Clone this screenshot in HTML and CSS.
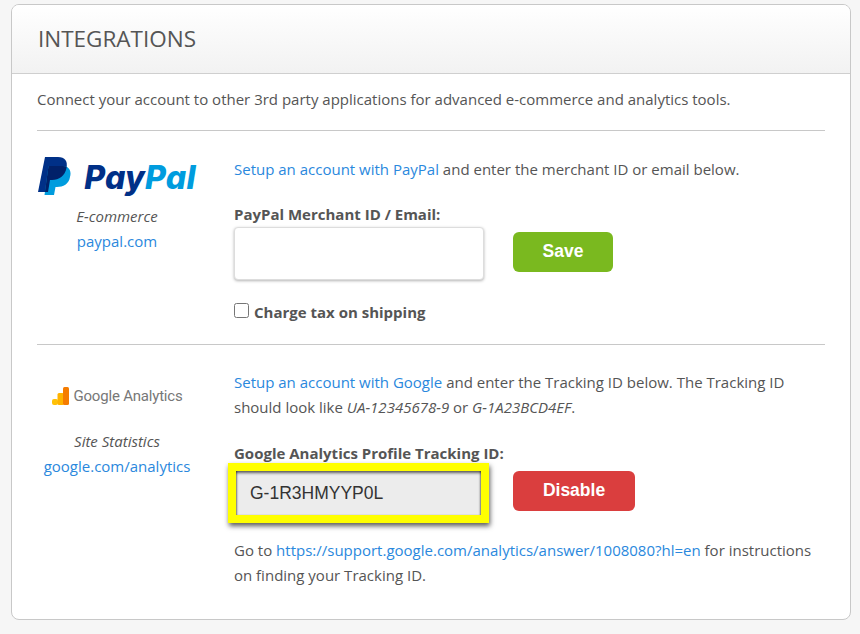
FILE: index.html
```html
<!DOCTYPE html>
<html lang="en">
<head>
<meta charset="utf-8">
<title>Integrations</title>
<link rel="stylesheet" href="styles.css">
</head>
<body>
<section class="card">
  <header class="card-head"><h1>INTEGRATIONS</h1></header>
  <div class="card-body">
    <p class="intro">Connect your account to other 3rd party applications for advanced e-commerce and analytics tools.</p>
    <div class="row row-paypal">
      <div class="side">
        <div class="logo logo-pp">
          <svg class="pp-mark" viewBox="0 0 33 38" width="33" height="38" aria-hidden="true">
            <defs>
              <clipPath id="pp-clip"><path d="M7 0H20C27 0 30 4 28.500 11C27 19 21 23 14 23H12L10 35H0Z"/></clipPath>
            </defs>
            <path fill="#003087" d="M7 0H20C27 0 30 4 28.500 11C27 19 21 23 14 23H12L10 35H0Z"/>
            <path fill="#009cde" d="M10.500 9H25C30 9 34 13 32 20C31 27 25 30 19 30H17.500L16 38H6.500Z"/>
            <path fill="#012169" clip-path="url(#pp-clip)" d="M10.500 9H25C30 9 34 13 32 20C31 27 25 30 19 30H17.500L16 38H6.500Z"/>
          </svg>
          <span class="pp-word"><span class="pp-pay">Pay</span><span class="pp-pal">Pal</span></span>
        </div>
        <em class="cat">E-commerce</em>
        <a href="#">paypal.com</a>
      </div>
      <div class="main">
        <p class="lead"><a href="#">Setup an account with PayPal</a> and enter the merchant ID or email below.</p>
        <label class="field-label">PayPal Merchant ID / Email:</label>
        <div class="field-row">
          <input class="text-input" type="text">
          <button class="btn btn-save" type="button">Save</button>
        </div>
        <label class="check"><input type="checkbox"><span>Charge tax on shipping</span></label>
      </div>
    </div>
    <div class="row row-ga">
      <div class="side">
        <div class="logo logo-ga">
          <svg viewBox="0 0 17 18" width="17" height="18" aria-hidden="true">
            <rect x="0" y="12" width="6" height="6" rx="2" fill="#ffc107"/>
            <rect x="5.500" y="6" width="6.500" height="12" rx="1.500" fill="#ffb300"/>
            <rect x="11" y="0" width="6" height="18" rx="1.500" fill="#f57c00"/>
          </svg>
          <span class="ga-word">Google Analytics</span>
        </div>
        <em class="cat">Site Statistics</em>
        <a href="#">google.com/analytics</a>
      </div>
      <div class="main">
        <p class="lead"><a href="#">Setup an account with Google</a> and enter the Tracking ID below. The Tracking ID should look like <em>UA-12345678-9</em> or <em>G-1A23BCD4EF</em>.</p>
        <label class="field-label field-label-ga">Google Analytics Profile Tracking ID:</label>
        <div class="field-row">
          <div class="highlight"><input class="text-input text-input-off" type="text" value="G-1R3HMYYP0L" disabled></div>
          <button class="btn btn-disable" type="button">Disable</button>
        </div>
        <p class="foot">Go to <a href="#">https://support.google.com/analytics/answer/1008080?hl=en</a> for instructions on finding your Tracking ID.</p>
      </div>
    </div>
  </div>
</section>
</body>
</html>
```

FILE: styles.css
```css
* { box-sizing: border-box; }
html, body { height: 100%; }
body {
  margin: 0;
  padding: 4px 9px 14px 11px;
  background: #f6f6f6;
  font-family: "Open Sans", sans-serif;
  font-size: 15px;
  line-height: 25px;
  color: #555;
  overflow: hidden;
}
a { color: #2a88dd; text-decoration: none; }
p { margin: 0; }
.card {
  height: 616px;
  background: #fff;
  border: 1px solid #c8c8c8;
  border-radius: 8px;
  overflow: hidden;
}
.card-head {
  height: 69px;
  padding: 0 26px 2px;
  display: flex;
  align-items: center;
  background: linear-gradient(#ffffff, #f2f2f2);
  border-bottom: 1px solid #cfcfcf;
}
.card-head h1 {
  margin: 0;
  font-size: 22.5px;
  font-weight: 400;
  color: #555;
}
.card-body { padding: 13px 25px 0; }
.intro { padding-bottom: 18px; }
.row { display: flex; border-top: 1px solid #c8c8c8; }
.row-paypal { padding-top: 26px; height: 214px; }
.row-ga { padding-top: 25px; }
.side {
  width: 160px;
  flex: none;
  display: flex;
  flex-direction: column;
  align-items: center;
}
.main { margin-left: 37px; flex: 1; }
.cat { display: block; }
.logo { display: flex; align-items: center; }
.logo-pp { height: 38px; margin-bottom: 9px; gap: 13px; }
.pp-mark { flex: none; }
.pp-word {
  font-family: Inter, sans-serif;
  font-weight: 800;
  font-style: italic;
  font-size: 32px;
  line-height: 38px;
  letter-spacing: 0.2px;
  position: relative;
  top: 2px;
}
.pp-pay { color: #003087; }
.pp-pal { color: #009cde; }
.logo-ga { height: 18px; margin: 17px 0 24px; gap: 5px; }
.ga-word {
  font-family: Roboto, sans-serif;
  font-size: 15px;
  line-height: 18px;
  color: #777;
  letter-spacing: -0.2px;
}
.field-label { display: block; margin-top: 20px; font-weight: 700; }
.field-label-ga { margin-top: 21px; }
.field-row { display: flex; align-items: flex-start; }
.text-input {
  width: 250px;
  height: 53px;
  border: 1px solid #ddd;
  border-radius: 4px;
  background: #fff;
  box-shadow: 0 1px 3px rgba(0,0,0,.3);
  font-family: "Liberation Sans", sans-serif;
  font-size: 17.5px;
  padding: 0 13px;
}
.btn {
  margin-left: 29px;
  margin-top: 5px;
  height: 40px;
  border: 0;
  border-radius: 6px;
  color: #fff;
  font-family: "Liberation Sans", sans-serif;
  font-size: 17.5px;
  font-weight: 700;
  padding-bottom: 3px;
}
.btn-save { width: 100px; background: #7ab91f; }
.btn-disable { width: 122px; background: #da3e3e; margin-left: 24px; margin-top: 5px; }
.check { display: flex; align-items: center; margin-top: 20px; font-weight: 700; }
.check input { margin: 0 5px 0 0; width: 15px; height: 15px; position: relative; top: -2px; }
.highlight {
  padding: 8px;
  background: #ff0;
  box-shadow: 1px 3px 5px rgba(0,0,0,.65);
  margin: -3px 0 0 -6px;
}
.text-input-off {
  display: block;
  width: 245px;
  height: 44px;
  background: #ececec;
  color: #333;
  border: 0;
  border-radius: 0;
  box-shadow: inset 0 3px 3px -1px rgba(0,0,0,.6), inset 2px 0 2px -1px rgba(0,0,0,.45), inset -2px 0 2px -1px rgba(0,0,0,.45);
  padding: 0 14px;
}
.foot { margin-top: 15px; }
```
